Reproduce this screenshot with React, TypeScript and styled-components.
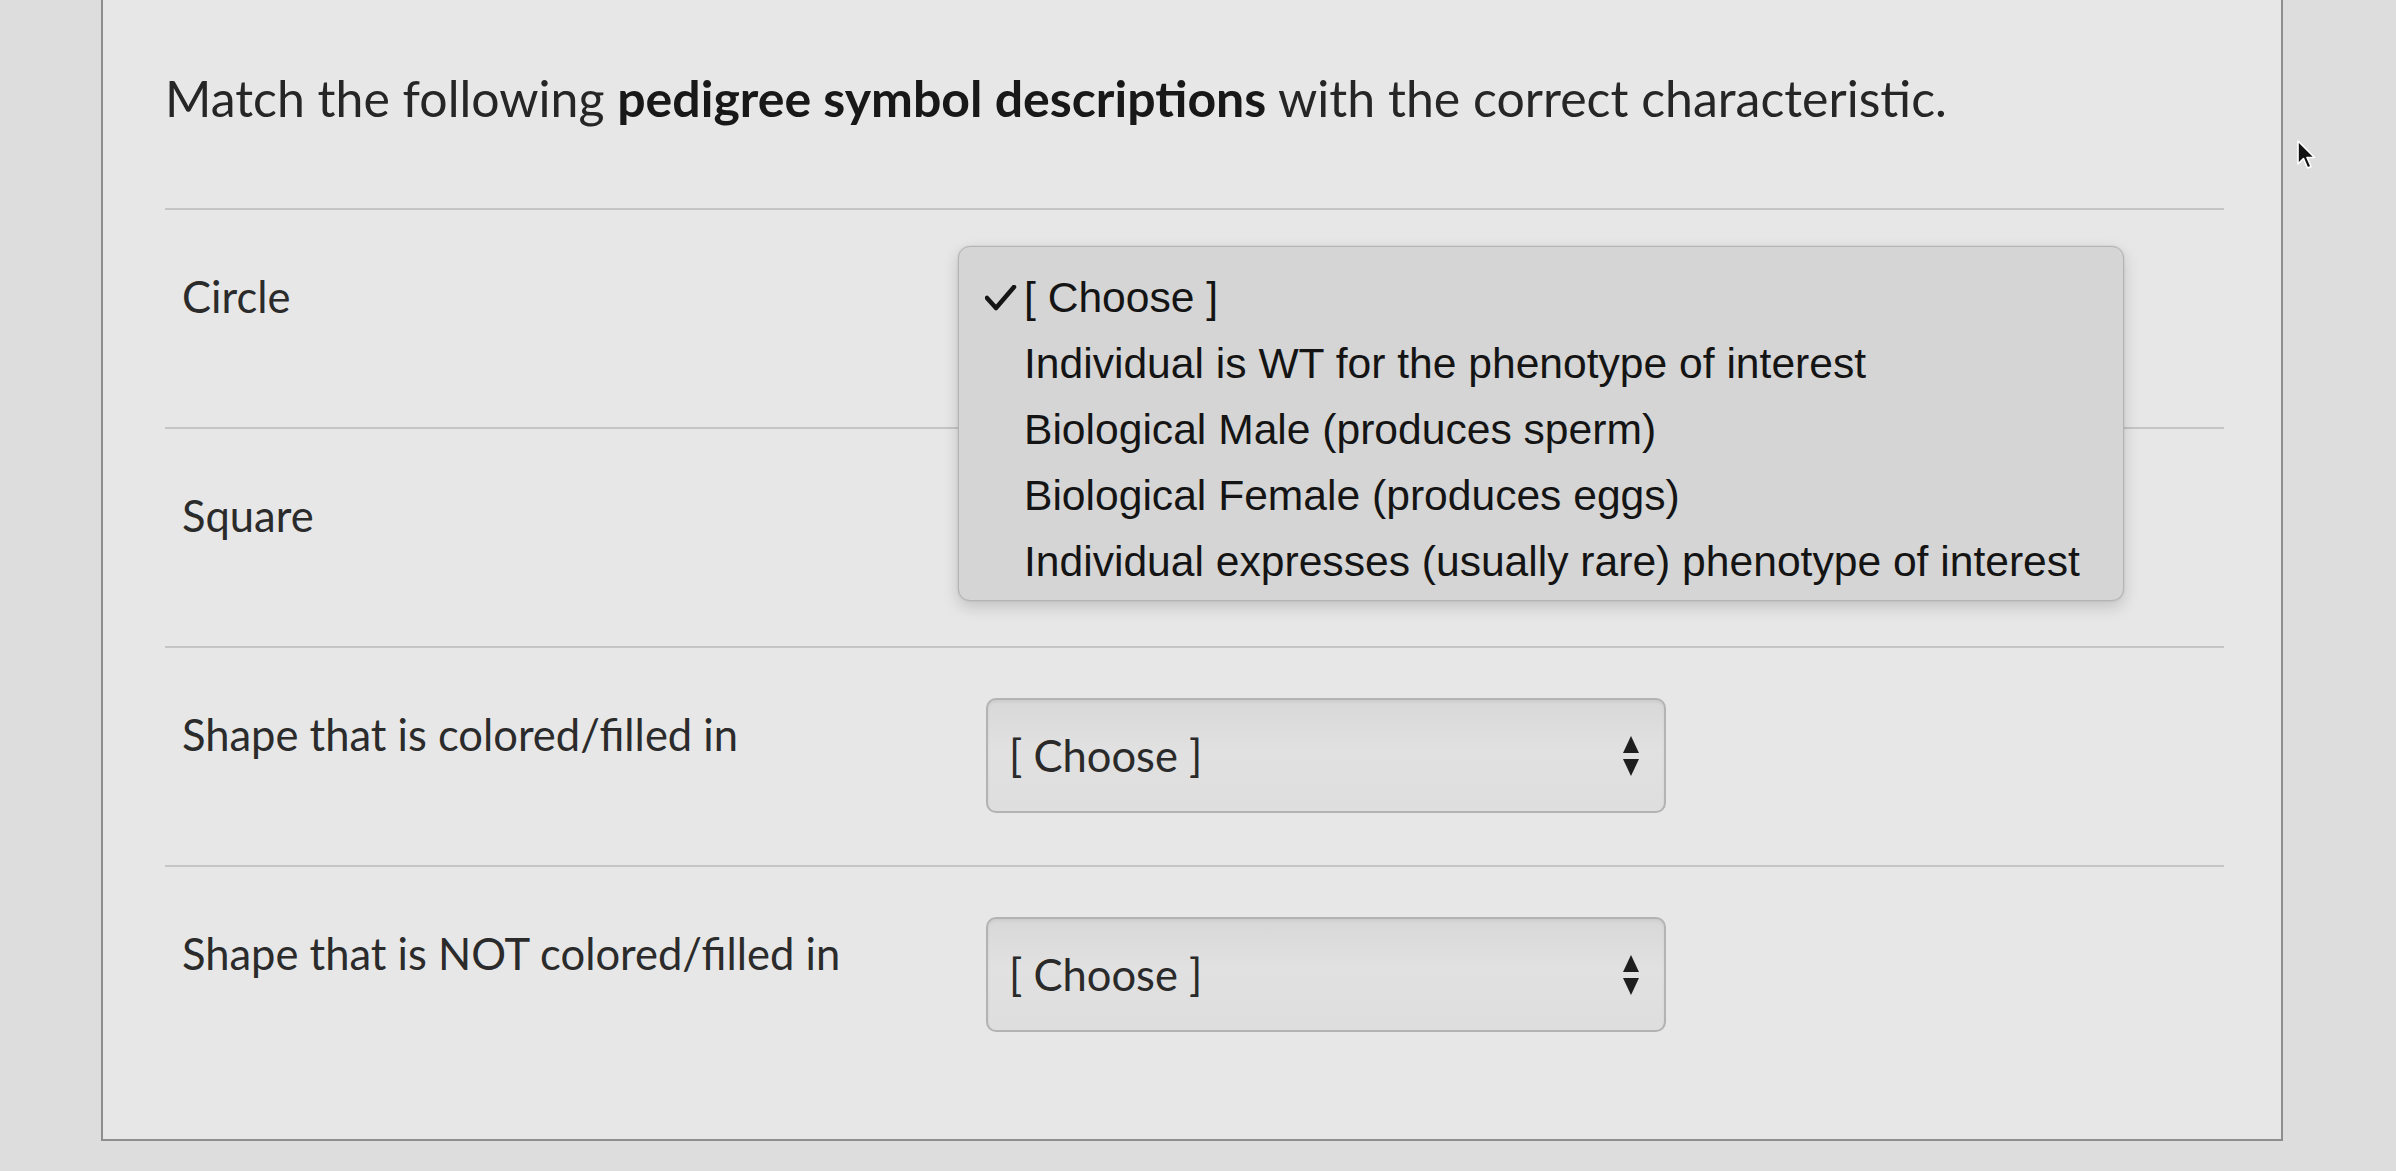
import React from "react";
import styled, { createGlobalStyle } from "styled-components";

const Global = createGlobalStyle`
  html, body { margin: 0; padding: 0; }
  body {
    background: #dcdddc;
    font-family: "Lato", "Open Sans", sans-serif;
    color: #262626;
  }
  * { box-sizing: border-box; }
`;

const Page = styled.div`
  position: relative;
  width: 2396px;
  height: 1171px;
  overflow: hidden;
  padding-left: 101px;
`;

const Card = styled.div`
  width: 2182px;
  height: 1141px;
  background: #e7e7e7;
  border: 2px solid #8e8e8e;
  border-top: none;
  padding: 68px 57px 0 62px;
`;

const Title = styled.h1`
  margin: 0 0 80px 0;
  font-size: 50px;
  line-height: 1.2;
  font-weight: 400;
  color: #262626;
  white-space: nowrap;
  b { font-weight: 700; color: #181818; }
`;

const List = styled.div`
  border-top: 2px solid #c5c5c5;
`;

const Row = styled.div<{ $last?: boolean }>`
  display: grid;
  grid-template-columns: 804px 680px;
  align-items: start;
  height: ${(p) => (p.$last ? "240px" : "219px")};
  padding-left: 17px;
  border-bottom: ${(p) => (p.$last ? "none" : "2px solid #c5c5c5")};
`;

const Label = styled.div`
  padding-top: 60px;
  font-size: 43.5px;
  line-height: 1.2;
  color: #2b2b2b;
  white-space: nowrap;
`;

const SelectCell = styled.div`
  position: relative;
  padding-top: 50px;
`;

const SelectBox = styled.div<{ $covered?: boolean }>`
  visibility: ${(p) => (p.$covered ? "hidden" : "visible")};
  width: 680px;
  height: 115px;
  border: 2px solid #b3b3b3;
  border-radius: 10px;
  background: linear-gradient(#d8d8d8, #e1e1e1 45%, #dedede);
  box-shadow: inset 0 2px 3px rgba(0, 0, 0, 0.06);
  display: flex;
  align-items: center;
  justify-content: space-between;
  padding: 0 24px 0 21px;
  font-size: 43.5px;
  line-height: 1.2;
  color: #2a2a2a;
`;

const Popup = styled.div`
  position: absolute;
  z-index: 5;
  left: -28px;
  top: 36px;
  width: 1166px;
  height: 355px;
  background: #d5d5d5;
  border: 1px solid #b4b4b4;
  border-radius: 12px;
  box-shadow: 0 6px 16px rgba(0, 0, 0, 0.16), 0 0 2px rgba(0, 0, 0, 0.15);
  padding: 17px 0 6px 0;
`;

const Option = styled.div`
  position: relative;
  height: 66px;
  line-height: 66px;
  padding-left: 65px;
  font-family: "Liberation Sans", Arial, sans-serif;
  font-size: 42.6px;
  color: #141414;
  white-space: nowrap;
`;

const Check = styled.svg`
  position: absolute;
  left: 26px;
  top: 21px;
`;

const Cursor = styled.svg`
  position: absolute;
  left: 2297px;
  top: 140px;
`;

const Arrows = () => (
  <svg width="18" height="42" viewBox="0 0 18 42">
    <path d="M9 1 L17 18 L1 18 Z" fill="#1e1e1e" />
    <path d="M1 24 L17 24 L9 41 Z" fill="#1e1e1e" />
  </svg>
);

const options = [
  "[ Choose ]",
  "Individual is WT for the phenotype of interest",
  "Biological Male (produces sperm)",
  "Biological Female (produces eggs)",
  "Individual expresses (usually rare) phenotype of interest",
];

const rows = [
  "Circle",
  "Square",
  "Shape that is colored/filled in",
  "Shape that is NOT colored/filled in",
];

export default function App() {
  return (
    <>
      <Global />
      <Page>
        <Card>
          <Title>
            Match the following <b>pedigree symbol descriptions</b> with the correct characteristic.
          </Title>
          <List>
            {rows.map((label, i) => (
              <Row key={label} $last={i === rows.length - 1}>
                <Label>{label}</Label>
                <SelectCell>
                  <SelectBox $covered={i < 2}>
                    <span>[ Choose ]</span>
                    <Arrows />
                  </SelectBox>
                  {i === 0 && (
                    <Popup>
                      {options.map((o, j) => (
                        <Option key={o}>
                          {j === 0 && (
                            <Check width="32" height="26" viewBox="0 0 32 26">
                              <path
                                d="M2 13 L11 23 L29 2"
                                fill="none"
                                stroke="#151515"
                                strokeWidth="4.5"
                                strokeLinecap="round"
                                strokeLinejoin="round"
                              />
                            </Check>
                          )}
                          {o}
                        </Option>
                      ))}
                    </Popup>
                  )}
                </SelectCell>
              </Row>
            ))}
          </List>
        </Card>
        <Cursor width="20" height="32" viewBox="0 0 20 32">
          <path
            d="M1 1 L1 24 L6.5 18.5 L10.5 28 L14 26.5 L10 17.5 L17.5 17.5 Z"
            fill="#111"
            stroke="#fff"
            strokeWidth="1.6"
            strokeLinejoin="round"
          />
        </Cursor>
      </Page>
    </>
  );
}
